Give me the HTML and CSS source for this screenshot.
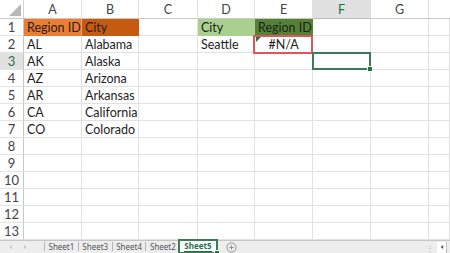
FILE: index.html
```html
<!DOCTYPE html>
<html>
<head>
<meta charset="utf-8">
<link rel="stylesheet" href="styles.css">
</head>
<body>
<div class="sheet">
  <div class="grid">
    <div class="corner"><svg class="corner-tri" width="14" height="14" viewBox="0 0 14 14"><polygon points="13,1 13,13 1,13" fill="#b8b8b8"/></svg></div>
    <div class="ch">A</div><div class="ch">B</div><div class="ch">C</div><div class="ch">D</div><div class="ch">E</div><div class="ch sel">F</div><div class="ch">G</div><div class="ch last"></div>

    <div class="rh">1</div><div class="c f-orange">Region ID</div><div class="c f-dorange">City</div><div class="c"></div><div class="c f-lgreen">City</div><div class="c f-dgreen">Region ID</div><div class="c"></div><div class="c"></div><div class="c"></div>

    <div class="rh">2</div><div class="c">AL</div><div class="c">Alabama</div><div class="c"></div><div class="c">Seattle</div><div class="c err"><span class="err-tri"></span>#N/A</div><div class="c"></div><div class="c"></div><div class="c"></div>

    <div class="rh sel">3</div><div class="c">AK</div><div class="c">Alaska</div><div class="c"></div><div class="c"></div><div class="c"></div><div class="c active"></div><div class="c"></div><div class="c"></div>

    <div class="rh">4</div><div class="c">AZ</div><div class="c">Arizona</div><div class="c"></div><div class="c"></div><div class="c"></div><div class="c"></div><div class="c"></div><div class="c"></div>

    <div class="rh">5</div><div class="c">AR</div><div class="c">Arkansas</div><div class="c"></div><div class="c"></div><div class="c"></div><div class="c"></div><div class="c"></div><div class="c"></div>

    <div class="rh">6</div><div class="c">CA</div><div class="c">California</div><div class="c"></div><div class="c"></div><div class="c"></div><div class="c"></div><div class="c"></div><div class="c"></div>

    <div class="rh">7</div><div class="c">CO</div><div class="c">Colorado</div><div class="c"></div><div class="c"></div><div class="c"></div><div class="c"></div><div class="c"></div><div class="c"></div>

    <div class="rh">8</div><div class="c"></div><div class="c"></div><div class="c"></div><div class="c"></div><div class="c"></div><div class="c"></div><div class="c"></div><div class="c"></div>

    <div class="rh">9</div><div class="c"></div><div class="c"></div><div class="c"></div><div class="c"></div><div class="c"></div><div class="c"></div><div class="c"></div><div class="c"></div>

    <div class="rh">10</div><div class="c"></div><div class="c"></div><div class="c"></div><div class="c"></div><div class="c"></div><div class="c"></div><div class="c"></div><div class="c"></div>

    <div class="rh">11</div><div class="c"></div><div class="c"></div><div class="c"></div><div class="c"></div><div class="c"></div><div class="c"></div><div class="c"></div><div class="c"></div>

    <div class="rh">12</div><div class="c"></div><div class="c"></div><div class="c"></div><div class="c"></div><div class="c"></div><div class="c"></div><div class="c"></div><div class="c"></div>

    <div class="rh">13</div><div class="c"></div><div class="c"></div><div class="c"></div><div class="c"></div><div class="c"></div><div class="c"></div><div class="c"></div><div class="c"></div>
  </div>

  <div class="tabbar">
    <div class="nav">
      <svg width="6" height="6" viewBox="0 0 6 6"><polygon points="4,1 4,5 1.5,3" fill="#c4c4c4"/></svg>
      <svg width="6" height="6" viewBox="0 0 6 6"><polygon points="2,1 2,5 4.5,3" fill="#c4c4c4"/></svg>
    </div>
    <div class="tabs">
      <div class="tab">Sheet1</div>
      <div class="tab">Sheet3</div>
      <div class="tab">Sheet4</div>
      <div class="tab">Sheet2</div>
      <div class="tab active"><span>Sheet5</span></div>
      <div class="add">
        <svg width="11" height="11" viewBox="0 0 11 11"><circle cx="5.5" cy="5.5" r="4.6" fill="none" stroke="#8a8a8a" stroke-width="0.9"/><path d="M5.5 3.2v4.6M3.2 5.5h4.6" stroke="#8a8a8a" stroke-width="0.9"/></svg>
      </div>
    </div>
    <div class="scroll">
      <span class="dots">⋮</span>
      <div class="sbtn"><svg width="6" height="6" viewBox="0 0 6 6"><polygon points="4.2,1 4.2,5 1.6,3" fill="#555"/></svg></div>
    </div>
  </div>
</div>
</body>
</html>
```

FILE: styles.css
```css
html, body {
  margin: 0;
  padding: 0;
  background: #ffffff;
}
body {
  width: 450px;
  height: 253px;
  overflow: hidden;
  font-family: Lato, "Open Sans", sans-serif;
}
.sheet {
  width: 450px;
  height: 253px;
  display: flex;
  flex-direction: column;
}
.grid {
  display: grid;
  grid-template-columns: 24px 58px 57px 59px 57px 58px 58px 58px 1fr;
  grid-template-rows: 19px repeat(13, 17px);
  flex: none;
}
.grid > div {
  box-sizing: border-box;
  min-width: 0;
}
.corner {
  background: #ffffff;
  border-right: 1px solid #d4d4d4;
  border-bottom: 1px solid #c8c8c8;
  position: relative;
}
.corner-tri {
  position: absolute;
  right: 1px;
  bottom: 1px;
}
.ch {
  background: #ffffff;
  color: #444444;
  font-size: 12.5px;
  text-align: center;
  line-height: 19px;
  border-right: 1px solid #e0e0e0;
  border-bottom: 1px solid #c8c8c8;
}
.ch.sel {
  background: #e1e1e1;
  color: #217346;
  border-bottom: 1px solid #bcbcbc;
}
.ch.last {
  border-right: none;
}
.rh {
  background: #ffffff;
  color: #444444;
  font-size: 13px;
  text-align: center;
  line-height: 17px;
  border-right: 1px solid #c8c8c8;
  border-bottom: 1px solid #e4e4e4;
}
.rh.sel {
  background: #e1e1e1;
  color: #217346;
}
.c {
  font-size: 12.5px;
  color: #1e1e1e;
  line-height: 17px;
  padding-left: 3px;
  white-space: nowrap;
  overflow: visible;
  border-right: 1px solid #e1e1e1;
  border-bottom: 1px solid #e1e1e1;
}
.f-orange {
  background: #ed7d31;
  border-color: #ed7d31;
  border-right-color: #f0a070;
}
.f-dorange {
  background: #c65a11;
  border-color: #c65a11;
}
.f-lgreen {
  background: #a9d08e;
  border-color: #a9d08e;
}
.f-dgreen {
  background: #548235;
  border-color: #548235;
}
.err {
  position: relative;
  text-align: center;
  padding-left: 0;
}
.err::after {
  content: "";
  position: absolute;
  left: -2px;
  top: -1px;
  right: -1px;
  bottom: -2px;
  border: 2px solid #e2545c;
}
.err-tri {
  position: absolute;
  left: 1px;
  top: 1px;
  width: 0;
  height: 0;
  border-top: 5px solid #217346;
  border-right: 5px solid transparent;
}
.active {
  position: relative;
}
.active::after {
  content: "";
  position: absolute;
  left: -1px;
  top: -1px;
  right: -1px;
  bottom: -1px;
  border: 2px solid #3b7c56;
}
.active::before {
  content: "";
  position: absolute;
  right: -3px;
  bottom: -3px;
  width: 4px;
  height: 4px;
  background: #217346;
  border: 1px solid #ffffff;
  z-index: 2;
}
.tabbar {
  flex: 1;
  display: flex;
  align-items: stretch;
  background: #ededed;
  border-top: 1px solid #c6c6c6;
  font-family: "Noto Sans", "Open Sans", sans-serif;
  font-size: 8px;
  color: #555555;
}
.nav {
  width: 44px;
  display: flex;
  align-items: center;
  gap: 8px;
  padding-left: 8px;
  box-sizing: border-box;
}
.tabs {
  display: flex;
  align-items: stretch;
}
.tab {
  padding: 0 3.5px;
  line-height: 11px;
  border-left: 1px solid #b4b4b4;
  height: 9px;
  margin-top: 1px;
  display: flex;
  align-items: center;
}
.tab.active {
  background: #ffffff;
  border-left: none;
  margin-top: -1px;
  height: 13px;
  padding: 1px 5px 0;
  color: #217346;
  font-weight: 700;
  align-items: flex-start;
  box-sizing: border-box;
}
.tab.active span {
  border-bottom: 1.5px solid #217346;
  line-height: 9.5px;
  padding-bottom: 0.5px;
}
.add {
  display: flex;
  align-items: center;
  padding-left: 9px;
}
.scroll {
  margin-left: auto;
  display: flex;
  align-items: center;
  gap: 3px;
  padding-right: 3px;
}
.dots {
  color: #aaaaaa;
  font-size: 8px;
}
.sbtn {
  width: 9px;
  height: 11px;
  background: #ffffff;
  border-right: 1px solid #c0c0c0;
  display: flex;
  align-items: center;
  justify-content: center;
}
```
